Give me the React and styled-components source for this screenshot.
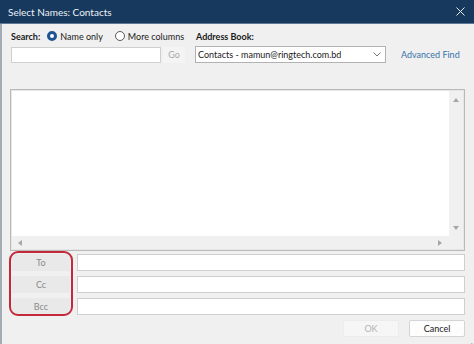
import React from "react";
import styled, { createGlobalStyle } from "styled-components";

const Global = createGlobalStyle`
  html, body { margin: 0; padding: 0; background: #f0f0f0; }
  body { font-family: "Lato", "Noto Sans", sans-serif; }
  #root { width: 474px; height: 344px; overflow: hidden; }
`;

const Window = styled.div`
  width: 474px;
  height: 344px;
  display: flex;
  flex-direction: column;
  background: #f0f0f0;
  position: relative;
`;

const TitleBar = styled.div`
  height: 24px;
  flex: none;
  background: #17395e;
  border-bottom: 1px solid #5d7896;
  box-sizing: border-box;
  display: flex;
  align-items: center;
  justify-content: space-between;
  padding: 0 9px 0 8px;
  color: #eef2f7;
  font-size: 10px;
`;

const Body = styled.div`
  flex: 1;
  border-left: 2px solid #a3acb5;
  padding: 5px 9px 0 8px;
  display: flex;
  flex-direction: column;
  font-size: 9px;
  color: #1a1a1a;
  white-space: nowrap;
`;

const TopGrid = styled.div`
  display: grid;
  grid-template-columns: 175px 191px auto;
  grid-template-rows: 14px 17px;
  column-gap: 9px;
  row-gap: 3px;
  margin-left: 1px;
  align-items: center;
`;

const Row = styled.div`
  display: flex;
  align-items: center;
  gap: ${(p) => p.$gap || 0}px;
`;

const Label = styled.span`
  font-weight: 700;
  margin-left: ${(p) => p.$ml || 0}px;
  margin-right: ${(p) => p.$mr || 0}px;
`;

const RadioWrap = styled.label`
  display: flex;
  align-items: center;
  gap: 3px;
  margin-right: ${(p) => p.$mr || 0}px;
`;

const RadioDot = styled.span`
  width: 10px;
  height: 10px;
  border-radius: 50%;
  box-sizing: border-box;
  border: ${(p) => (p.$on ? "3px solid #1c5592" : "1px solid #5a5a5a")};
  background: #fff;
  flex: none;
`;

const TextBox = styled.div`
  box-sizing: border-box;
  height: ${(p) => p.$h || 16}px;
  width: ${(p) => (p.$w ? `${p.$w}px` : "auto")};
  flex: ${(p) => (p.$w ? "none" : "1")};
  background: #fff;
  border: 1px solid #cfcfcf;
`;

const GoButton = styled.div`
  width: 22px;
  height: 16px;
  background: #f4f4f4;
  color: #a8a8a8;
  display: flex;
  align-items: center;
  justify-content: center;
`;

const Select = styled.div`
  box-sizing: border-box;
  height: 17px;
  background: #fff;
  border: 1px solid #b2b2b2;
  display: flex;
  align-items: center;
  justify-content: space-between;
  padding: 0 4px 0 2px;
`;

const Link = styled.span`
  color: #3771a9;
  margin-left: 6px;
`;

const ListBox = styled.div`
  margin-top: 26px;
  height: 162px;
  box-sizing: border-box;
  border: 1px solid #b9b9b9;
  box-shadow: inset 0 0 0 1px #e6e6e6;
  background: #fff;
  display: grid;
  grid-template-columns: 1fr 14px;
  grid-template-rows: 1fr 13px;
  padding: 1px;
`;

const Scroll = styled.div`
  background: #f0f0f0;
  display: flex;
  flex-direction: ${(p) => (p.$v ? "column" : "row")};
  align-items: center;
  justify-content: space-between;
  padding: ${(p) => (p.$v ? "6px 0 5px" : "0 6px 0 5px")};
`;

const Corner = styled.div`
  background: #f0f0f0;
`;

const Recipients = styled.div`
  position: relative;
  margin-top: 3px;
  display: grid;
  grid-template-columns: 62px 1fr;
  grid-auto-rows: 17px;
  column-gap: 5px;
  row-gap: 5px;
`;

const RecipButton = styled.div`
  margin: 0 2px;
  background: #e9e9e9;
  color: #8a8a8a;
  display: flex;
  align-items: center;
  justify-content: center;
`;

const Highlight = styled.div`
  position: absolute;
  left: -1px;
  top: -3px;
  width: 64px;
  height: 65px;
  box-sizing: border-box;
  border: 2px solid #c3293b;
  border-radius: 9px;
  pointer-events: none;
`;

const Footer = styled.div`
  margin-top: 5px;
  display: flex;
  justify-content: flex-end;
  gap: 10px;
`;

const DlgButton = styled.div`
  width: 56px;
  height: 17px;
  box-sizing: border-box;
  display: flex;
  align-items: center;
  justify-content: center;
  background: ${(p) => (p.$disabled ? "#f6f6f6" : "#fdfdfd")};
  color: ${(p) => (p.$disabled ? "#b4b4b4" : "#1a1a1a")};
  border: 1px solid ${(p) => (p.$disabled ? "#ececec" : "#d4d4d4")};
  border-radius: 2px;
`;

const Grip = styled.div`
  position: absolute;
  right: 1px;
  bottom: 1px;
  width: 8px;
  height: 8px;
`;

const Tri = ({ dir }) => {
  const pts = {
    up: "0,5 3,1 6,5",
    down: "0,1 6,1 3,5",
    left: "5,0 5,6 1,3",
    right: "1,0 1,6 5,3",
  }[dir];
  return (
    <svg width="6" height="6" viewBox="0 0 6 6">
      <polygon points={pts} fill="#a6a6a6" />
    </svg>
  );
};

export default function App() {
  return (
    <>
      <Global />
      <Window>
        <TitleBar>
          <span>Select Names: Contacts</span>
          <svg width="9" height="9" viewBox="0 0 9 9">
            <path d="M0.5 0.5 L8.5 8.5 M8.5 0.5 L0.5 8.5" stroke="#e6ecf3" strokeWidth="1" />
          </svg>
        </TitleBar>
        <Body>
          <TopGrid>
            <Row>
              <Label $mr={7}>Search:</Label>
              <RadioWrap $mr={12}>
                <RadioDot $on />
                <span>Name only</span>
              </RadioWrap>
              <RadioWrap>
                <RadioDot />
                <span>More columns</span>
              </RadioWrap>
            </Row>
            <Row>
              <Label $ml={1}>Address Book:</Label>
            </Row>
            <div />
            <Row $gap={2}>
              <TextBox $w={150} />
              <GoButton>Go</GoButton>
            </Row>
            <Select>
              <span>Contacts - mamun@ringtech.com.bd</span>
              <svg width="8" height="5" viewBox="0 0 8 5">
                <path d="M0.5 0.5 L4 4 L7.5 0.5" fill="none" stroke="#7a7a7a" strokeWidth="1" />
              </svg>
            </Select>
            <Link>Advanced Find</Link>
          </TopGrid>

          <ListBox>
            <div />
            <Scroll $v>
              <Tri dir="up" />
              <Tri dir="down" />
            </Scroll>
            <Scroll>
              <Tri dir="left" />
              <Tri dir="right" />
            </Scroll>
            <Corner />
          </ListBox>

          <Recipients>
            <RecipButton>To</RecipButton>
            <TextBox $h={17} />
            <RecipButton>Cc</RecipButton>
            <TextBox $h={17} />
            <RecipButton>Bcc</RecipButton>
            <TextBox $h={17} />
            <Highlight />
          </Recipients>

          <Footer>
            <DlgButton $disabled>OK</DlgButton>
            <DlgButton>Cancel</DlgButton>
          </Footer>
        </Body>
        <Grip>
          <svg width="8" height="8" viewBox="0 0 8 8">
            <g fill="#b8b8b8">
              <rect x="6" y="0" width="1.5" height="1.5" />
              <rect x="3" y="3" width="1.5" height="1.5" />
              <rect x="6" y="3" width="1.5" height="1.5" />
              <rect x="0" y="6" width="1.5" height="1.5" />
              <rect x="3" y="6" width="1.5" height="1.5" />
              <rect x="6" y="6" width="1.5" height="1.5" />
            </g>
          </svg>
        </Grip>
      </Window>
    </>
  );
}
